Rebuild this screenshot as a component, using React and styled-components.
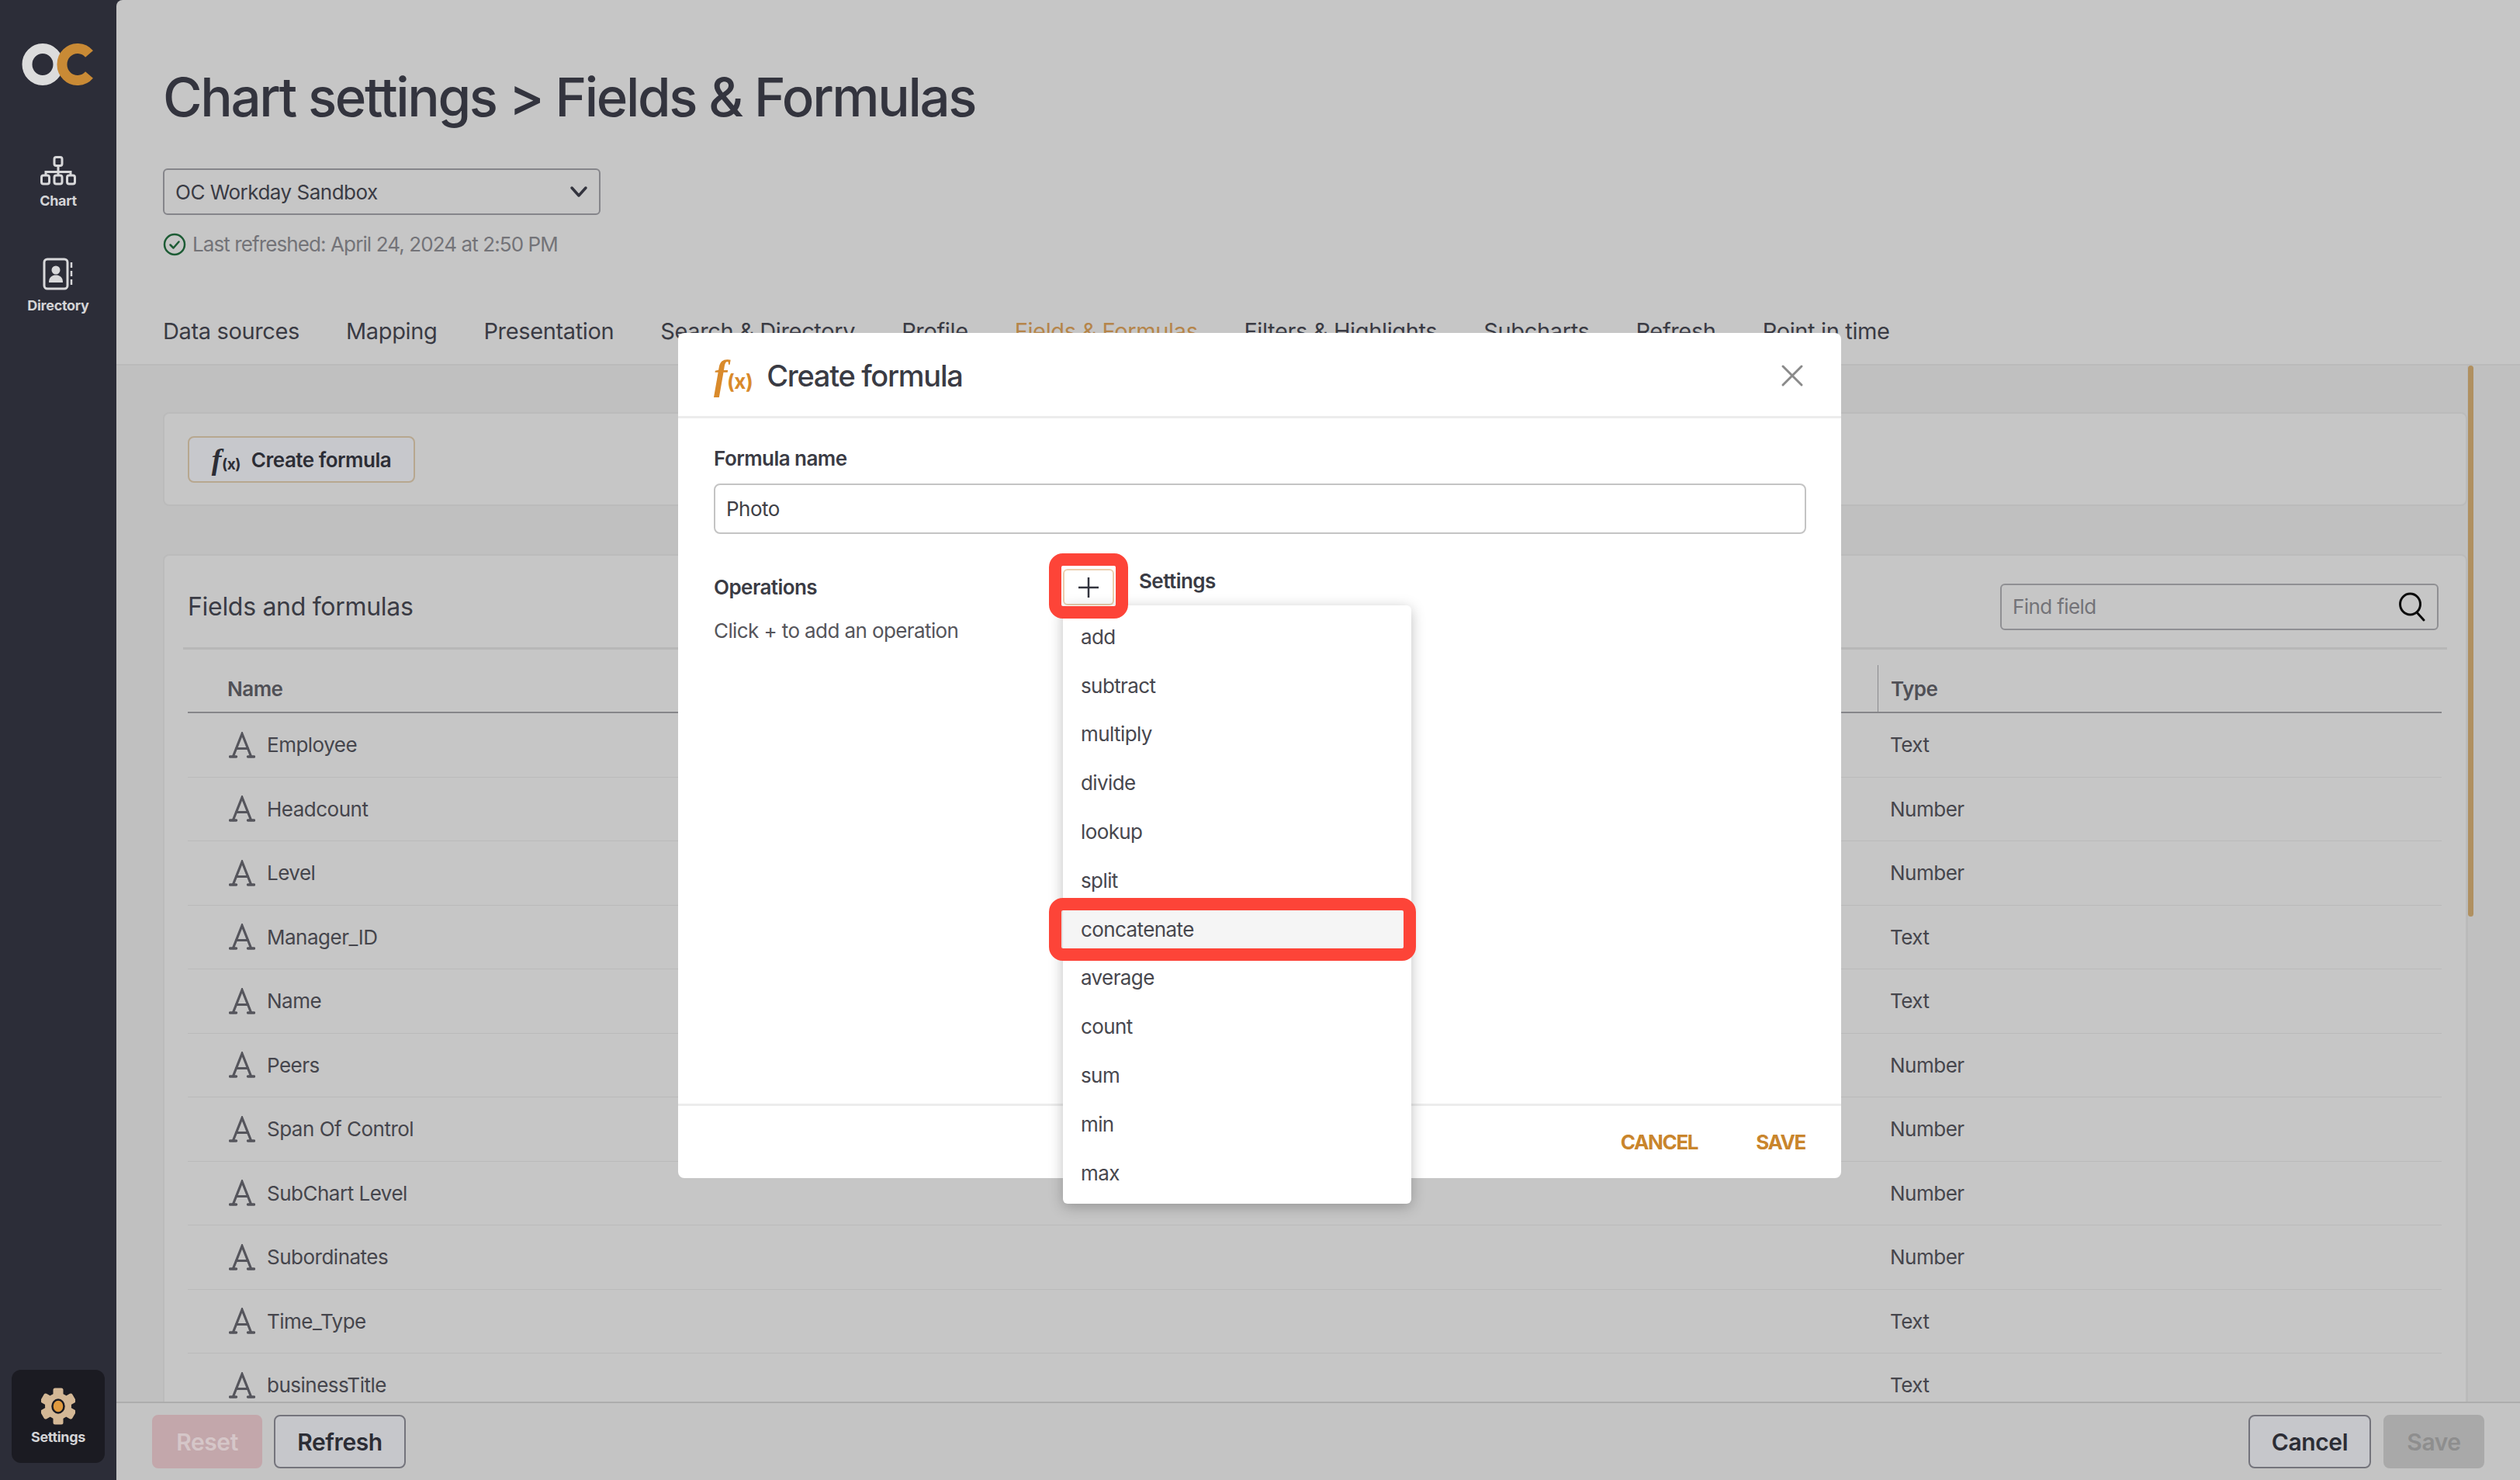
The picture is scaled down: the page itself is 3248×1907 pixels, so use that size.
import React from "react";
import styled, { createGlobalStyle } from "styled-components";

const Global = createGlobalStyle`
  html, body { margin: 0; padding: 0; width: 3248px; height: 1907px; overflow: hidden; background: #2c2d38; }
  * { box-sizing: border-box; }
  body { font-family: Inter, "Liberation Sans", sans-serif; color: #33343e; }
`;

const Root = styled.div`position: relative; display: flex; width: 3248px; height: 1907px; overflow: hidden;`;

const Sidebar = styled.nav`
  width: 150px; flex: none; height: 100%; background: #2c2d38;
  display: flex; flex-direction: column; align-items: center; padding: 56px 0 22px;
`;
const Logo = styled.svg`width: 96px; height: 54px; margin-bottom: 82px; margin-left: 2px;`;
const NavItem = styled.div`
  display: flex; flex-direction: column; align-items: center; justify-content: center;
  width: 120px; height: ${p => p.$active ? 120 : 85}px; margin-bottom: ${p => p.$active ? 0 : 48}px;
  margin-top: ${p => p.$active ? "auto" : 0}; border-radius: 12px;
  background: ${p => p.$active ? "#1b1b22" : "transparent"};
  color: #d4d4d6; font-size: 18px; font-weight: 700; letter-spacing: -0.3px; gap: ${p => p.$active ? 5 : 9}px;
`;

const Main = styled.main`flex: 1; min-width: 0; display: flex; flex-direction: column; height: 100%; background: #c6c6c6; border-top-left-radius: 8px;`;
const Header = styled.header`height: 471px; flex: none; padding: 85px 0 0 60px; border-bottom: 2px solid #bababa;`;
const Title = styled.h1`margin: 0; font-size: 69px; line-height: 80px; font-weight: 500; letter-spacing: -2.35px; color: #33343e;`;
const SourceSelect = styled.div`
  margin-top: 52px; width: 564px; height: 60px; border: 2px solid #85858a; border-radius: 6px;
  display: flex; align-items: center; justify-content: space-between; padding: 0 14px;
  font-size: 26px; letter-spacing: -0.5px; color: #3a3b44;
`;
const Status = styled.div`
  margin-top: 22px; display: flex; align-items: center; gap: 8px;
  font-size: 26px; line-height: 32px; color: #737378; letter-spacing: -0.9px;
`;
const Tabs = styled.div`margin-top: 78px; display: flex; gap: 60px;`;
const Tab = styled.span`
  font-size: 29px; line-height: 36px; font-weight: 400; letter-spacing: -0.36px;
  color: ${p => p.$active ? "#b5854a" : "#3a3b44"};
`;

const Content = styled.div`flex: 1; min-height: 0; display: flex; background: #c0c0c0;`;
const Scroller = styled.div`flex: 1; min-width: 0; overflow: hidden; padding: 60px 0 0 60px;`;
const Track = styled.div`width: 68px; flex: none; border-left: 1px solid #b9b9b9;`;
const Thumb = styled.div`width: 7px; height: 710px; background: #b09060; border-radius: 4px;`;

const Card = styled.section`
  background: #c6c6c6; border: 2px solid #bbbbbb; border-radius: 8px;
  margin-bottom: 62px;
`;
const ActionCard = styled(Card)`height: 121px; padding: 29px 30px;`;
const OutlineAction = styled.button`
  height: 60px; width: 293px; display: flex; align-items: center; justify-content: center; gap: 14px;
  background: #c7c8cc; border: 2px solid #b7a78f; border-radius: 8px; font: 600 26px Inter, sans-serif;
  letter-spacing: -0.5px; color: #2c2d35; padding: 0;
`;
const Fx = styled.span`
  display: inline-flex; align-items: baseline; color: ${p => p.$color};
  font-family: "Liberation Serif", serif; font-style: italic;
  font-size: ${p => p.$size}px; line-height: 1; white-space: nowrap; font-weight: 700;
  & > i { font-family: Inter, sans-serif; font-style: normal; font-weight: 700; font-size: 0.5em; letter-spacing: -0.5px; margin-left: 1px; }
`;
const CardHead = styled.div`
  height: 121px; margin: 0 24px 0 24px; padding: 13px 11px 0 6px; border-bottom: 3px solid #b7b7b7;
  display: flex; align-items: center; justify-content: space-between;
`;
const CardTitle = styled.h2`margin: 0; font-size: 32px; font-weight: 400; letter-spacing: -0.3px; color: #3a3b44;`;
const Search = styled.div`
  width: 565px; height: 60px; border: 2px solid #8f8f93; border-radius: 6px;
  display: flex; align-items: center; justify-content: space-between; padding: 0 14px;
  font-size: 26px; letter-spacing: -0.6px; color: #737378;
`;
const Table = styled.div`margin: 0 31px 0 30px;`;
const HeadRow = styled.div`
  display: grid; grid-template-columns: 2178px 1fr; height: 82px; align-items: end;
  border-bottom: 2px solid #868689;
`;
const HeadCell = styled.div`
  height: 60px; display: flex; align-items: center; font-size: 26px; font-weight: 600; letter-spacing: -0.5px; color: #505056;
  padding-left: ${p => p.$type ? 16 : 51}px; border-left: ${p => p.$type ? "1px solid #8b8b8f" : "none"};
`;
const Row = styled.div`
  display: grid; grid-template-columns: 2178px 1fr; height: 82.5px; align-items: center;
  border-bottom: 1px solid #bababa; font-size: 26px; letter-spacing: -0.5px; color: #45454c;
`;
const NameCell = styled.div`display: flex; align-items: center; gap: 15px; padding-left: 53px;`;
const TypeCell = styled.div`padding-left: 16px;`;
const FieldIcon = styled.svg`width: 34px; height: 34px; flex: none;`;

const BottomBar = styled.footer`
  height: 101px; flex: none; background: #c4c4c4; border-top: 2px solid #adadad;
  display: flex; align-items: center; justify-content: space-between; padding: 0 46px 0 46px;
`;
const BarGroup = styled.div`display: flex; gap: ${p => p.$gap}px;`;
const BarButton = styled.button`
  height: 69px; width: ${p => p.$w}px; border-radius: 8px; font: 600 30px Inter, sans-serif; letter-spacing: -0.4px; padding: 0;
  background: ${p => p.$fill || "#c6c7cb"}; color: ${p => p.$ink || "#2c2d35"};
  border: 2px solid ${p => p.$fill || "#74747c"};
`;

const Modal = styled.div`
  position: absolute; left: 874px; top: 429px; width: 1499px; height: 1089px; background: #fff; border-radius: 8px;
  display: flex; flex-direction: column; z-index: 2;
`;
const ModalHead = styled.div`
  height: 110px; flex: none; border-bottom: 3px solid #ececec; display: flex; align-items: center;
  justify-content: space-between; padding: 2px 48px 0 46px;
`;
const ModalTitle = styled.div`display: flex; align-items: center; gap: 18px; font-size: 38px; font-weight: 500; letter-spacing: -1.3px; color: #3a3b44;`;
const ModalBody = styled.div`flex: 1; min-height: 0; padding: 36px 46px 0;`;
const FieldLabel = styled.div`font-size: 26px; line-height: 32px; font-weight: 600; letter-spacing: -0.55px; color: #3a3b44;`;
const NameInput = styled.div`
  margin-top: 16px; height: 65px; width: 1408px; border: 2px solid #c4c4c4; border-radius: 8px; display: flex; align-items: center;
  padding: 0 14px; font-size: 26px; letter-spacing: -0.5px; color: #3f3f46;
`;
const OpsRow = styled.div`margin-top: 45px; display: flex; align-items: flex-start;`;
const OpsColumn = styled.div`width: 450px; flex: none;`;
const OpsLabel = styled(FieldLabel)`line-height: 47px;`;
const Hint = styled.div`margin-top: 17px; font-size: 26px; line-height: 32px; letter-spacing: -0.6px; color: #55555b;`;
const AddWrap = styled.div`position: relative; width: 66px; height: 47px; flex: none;`;
const AddButton = styled.button`
  width: 66px; height: 47px; background: #fff; border: 2px solid #eccfae; border-radius: 6px;
  display: flex; align-items: center; justify-content: center; padding: 0; color: #33343e;
`;
const Highlight = styled.div`
  position: absolute; border: 16px solid #fd4438; border-radius: 18px; pointer-events: none; z-index: 3;
`;
const AddHighlight = styled(Highlight)`left: -18px; top: -20px; width: 102px; height: 84px;`;
const RowHighlight = styled(Highlight)`left: -18px; right: -6px; top: -9px; bottom: -9px;`;
const SettingsLabel = styled(FieldLabel)`margin-left: 32px;`;
const Menu = styled.ul`
  position: absolute; left: 0; top: 47px; width: 449px; margin: 0; padding: 9px 0 8px; list-style: none;
  background: #fff; border-radius: 6px; box-shadow: 0 4px 18px rgba(0,0,0,.25);
`;
const MenuItem = styled.li`
  position: relative; height: 62.8px; display: flex; align-items: center; padding-left: 23px;
  font-size: 26px; letter-spacing: -0.6px; color: #47474e;
  background: ${p => p.$hover ? "#f5f5f5" : "transparent"};
`;
const ModalFoot = styled.div`
  height: 96px; flex: none; border-top: 3px solid #ececec; display: flex; align-items: center; justify-content: flex-end;
  gap: 75px; padding-right: 46px; font-size: 26px; font-weight: 700; letter-spacing: -1.35px; color: #c9852c;
`;

const tabs = ["Data sources","Mapping","Presentation","Search & Directory","Profile","Fields & Formulas","Filters & Highlights","Subcharts","Refresh","Point in time"];
const rows = [["Employee","Text"],["Headcount","Number"],["Level","Number"],["Manager_ID","Text"],["Name","Text"],["Peers","Number"],["Span Of Control","Number"],["SubChart Level","Number"],["Subordinates","Number"],["Time_Type","Text"],["businessTitle","Text"]];
const ops = ["add","subtract","multiply","divide","lookup","split","concatenate","average","count","sum","min","max"];

const AGlyph = () => (
  <FieldIcon viewBox="0 0 34 34" fill="none" stroke="#55555c" strokeLinecap="round">
    <path d="M5.500 31.500 17 2.500 28.500 31.500" strokeWidth="3.200" />
    <path d="M9.500 21.500h15" strokeWidth="2.800" />
    <path d="M1.500 32h8M24.500 32h8" strokeWidth="3.400" />
  </FieldIcon>
);

const ChartIcon = () => (
  <svg width="46" height="38" viewBox="0 0 46 38" fill="none" stroke="#d8d8da" strokeWidth="3">
    <rect x="18" y="1.500" width="10" height="11" rx="2.500" />
    <path d="M23 12.500v8M7 25v-4.500h32V25M23 20.500V25" />
    <rect x="1.500" y="25" width="10" height="11" rx="2.500" />
    <rect x="18" y="25" width="10" height="11" rx="2.500" />
    <rect x="34.500" y="25" width="10" height="11" rx="2.500" />
  </svg>
);

const DirectoryIcon = () => (
  <svg width="40" height="42" viewBox="0 0 40 42">
    <rect x="2" y="2" width="30" height="38" rx="4" fill="none" stroke="#d8d8da" strokeWidth="3" />
    <circle cx="17" cy="16" r="5.500" fill="#d8d8da" />
    <path d="M8 32c0-7 4-9.500 9-9.500s9 2.500 9 9.500z" fill="#d8d8da" />
    <path d="M37 6v7M37 17v7M37 28v7" stroke="#d8d8da" strokeWidth="2.500" />
  </svg>
);

const GearIcon = () => (
  <svg width="44" height="48" viewBox="-22 -24 44 48">
    {[0, 60, 120, 180, 240, 300].map(a => (
      <rect key={a} x="-6.500" y="-23.500" width="13" height="12" rx="2.500" fill="#d4b896" transform={`rotate(${a})`} />
    ))}
    <circle r="17" fill="#d4b896" />
    <ellipse rx="7.500" ry="8.500" fill="#e09a3e" stroke="#1b1b22" strokeWidth="2.500" />
  </svg>
);

const SearchIcon = () => (
  <svg width="36" height="38" viewBox="0 0 36 38" fill="none" stroke="#0c0c0c" strokeWidth="3" strokeLinecap="round">
    <ellipse cx="15.500" cy="15.500" rx="13" ry="13.500" />
    <path d="M24 26l9 10" />
  </svg>
);

export default function App() {
  return (
    <Root>
      <Global />
      <Sidebar>
        <Logo viewBox="0 0 96 54" fill="none" strokeWidth="13">
          <ellipse cx="27" cy="27" rx="20" ry="20.500" stroke="#dcdcdc" />
          <path d="M87 13.500A20 20.500 0 1 0 87 40.500" stroke="#c98a35" />
        </Logo>
        <NavItem><ChartIcon />Chart</NavItem>
        <NavItem><DirectoryIcon />Directory</NavItem>
        <NavItem $active><GearIcon />Settings</NavItem>
      </Sidebar>

      <Main>
        <Header>
          <Title>Chart settings &gt; Fields &amp; Formulas</Title>
          <SourceSelect>
            OC Workday Sandbox
            <svg width="24" height="16" viewBox="0 0 24 16" fill="none" stroke="#33343e" strokeWidth="3.500" strokeLinecap="round" strokeLinejoin="round"><path d="M3 3l9 10 9-10" /></svg>
          </SourceSelect>
          <Status>
            <svg width="30" height="30" viewBox="0 0 30 30" fill="none" stroke="#1d5c35" strokeWidth="2.500" strokeLinecap="round" strokeLinejoin="round"><circle cx="15" cy="15" r="13" /><path d="M9.500 15.500l4 4 7-8" /></svg>
            Last refreshed: April 24, 2024 at 2:50 PM
          </Status>
          <Tabs>{tabs.map(t => <Tab key={t} $active={t === "Fields & Formulas"}>{t}</Tab>)}</Tabs>
        </Header>

        <Content>
          <Scroller>
            <ActionCard>
              <OutlineAction><Fx $size={38} $color="#2c2d35">f<i>(x)</i></Fx>Create formula</OutlineAction>
            </ActionCard>
            <Card>
              <CardHead>
                <CardTitle>Fields and formulas</CardTitle>
                <Search>Find field<SearchIcon /></Search>
              </CardHead>
              <Table>
                <HeadRow>
                  <HeadCell>Name</HeadCell>
                  <HeadCell $type>Type</HeadCell>
                </HeadRow>
                {rows.map(([name, type]) => (
                  <Row key={name}>
                    <NameCell><AGlyph />{name}</NameCell>
                    <TypeCell>{type}</TypeCell>
                  </Row>
                ))}
              </Table>
            </Card>
          </Scroller>
          <Track><Thumb /></Track>
        </Content>

        <BottomBar>
          <BarGroup $gap={15}>
            <BarButton $w={142} $fill="#c3a7ab" $ink="#d5c6c8">Reset</BarButton>
            <BarButton $w={170}>Refresh</BarButton>
          </BarGroup>
          <BarGroup $gap={16}>
            <BarButton $w={158}>Cancel</BarButton>
            <BarButton $w={130} $fill="#a9a9a9" $ink="#8e8e8e">Save</BarButton>
          </BarGroup>
        </BottomBar>
      </Main>

      <Modal>
        <ModalHead>
          <ModalTitle><Fx $size={52} $color="#d98a2b">f<i>(x)</i></Fx>Create formula</ModalTitle>
          <svg width="30" height="30" viewBox="0 0 30 30" fill="none" stroke="#8a8a8a" strokeWidth="3" strokeLinecap="round"><path d="M3 3l24 24M27 3L3 27" /></svg>
        </ModalHead>
        <ModalBody>
          <FieldLabel>Formula name</FieldLabel>
          <NameInput>Photo</NameInput>
          <OpsRow>
            <OpsColumn>
              <OpsLabel>Operations</OpsLabel>
              <Hint>Click + to add an operation</Hint>
            </OpsColumn>
            <AddWrap>
              <AddButton>
                <svg width="28" height="28" viewBox="0 0 28 28" fill="none" stroke="#33343e" strokeWidth="2.500"><path d="M14 1v26M1 14h26" /></svg>
              </AddButton>
              <AddHighlight />
              <Menu>
                {ops.map(o => (
                  <MenuItem key={o} $hover={o === "concatenate"}>
                    {o}
                    {o === "concatenate" && <RowHighlight />}
                  </MenuItem>
                ))}
              </Menu>
            </AddWrap>
            <SettingsLabel>Settings</SettingsLabel>
          </OpsRow>
        </ModalBody>
        <ModalFoot>
          <span>CANCEL</span>
          <span>SAVE</span>
        </ModalFoot>
      </Modal>
    </Root>
  );
}
